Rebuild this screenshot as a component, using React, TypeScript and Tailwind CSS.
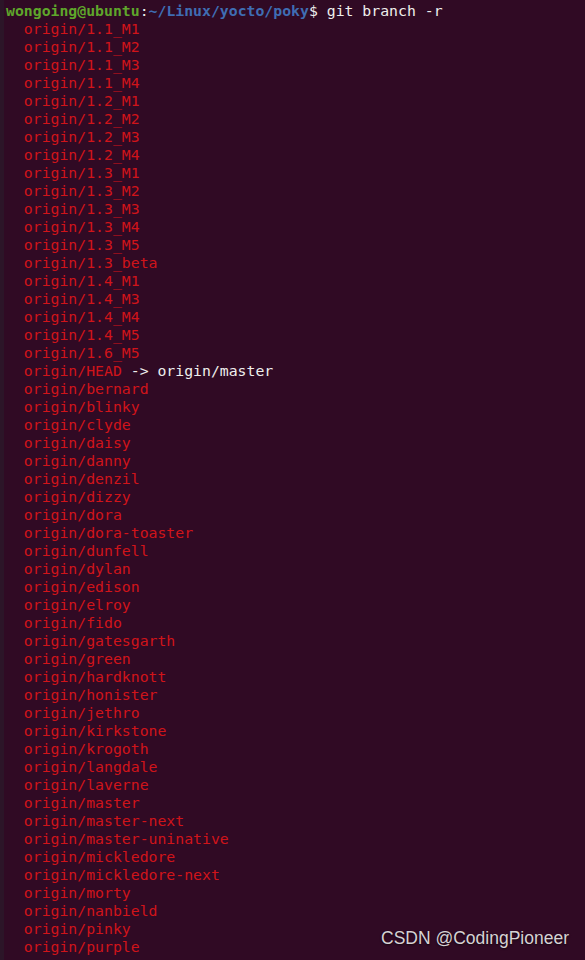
import React from 'react';

const branches = [
  '1.1_M1', '1.1_M2', '1.1_M3', '1.1_M4',
  '1.2_M1', '1.2_M2', '1.2_M3', '1.2_M4',
  '1.3_M1', '1.3_M2', '1.3_M3', '1.3_M4', '1.3_M5', '1.3_beta',
  '1.4_M1', '1.4_M3', '1.4_M4', '1.4_M5', '1.6_M5',
];

const names = [
  'bernard', 'blinky', 'clyde', 'daisy', 'danny', 'denzil', 'dizzy', 'dora',
  'dora-toaster', 'dunfell', 'dylan', 'edison', 'elroy', 'fido', 'gatesgarth',
  'green', 'hardknott', 'honister', 'jethro', 'kirkstone', 'krogoth', 'langdale',
  'laverne', 'master', 'master-next', 'master-uninative', 'mickledore',
  'mickledore-next', 'morty', 'nanbield', 'pinky', 'purple',
];

const Line = ({ children }: { children: React.ReactNode }) => (
  <div className="h-[18px] leading-[18px] whitespace-pre">{children}</div>
);

const Branch = ({ name }: { name: string }) => (
  <Line>
    <span className="text-[#d0141a]">{'  origin/' + name}</span>
  </Line>
);

export default function App() {
  return (
    <div className="relative flex h-[960px] w-[585px] overflow-hidden bg-[#300a24]">
      <div className="w-[4px] shrink-0 bg-[#2c1528]" />
      <div
        className="flex-1 pl-[2px] pt-[2px] text-[14.8px] text-[#eeeeec]"
        style={{ fontFamily: '"DejaVu Sans Mono", "Liberation Mono", monospace' }}
      >
        <Line>
          <span className="font-bold text-[#5fa62b]">wongoing@ubuntu</span>
          <span>:</span>
          <span className="font-bold text-[#3f6db3]">~/Linux/yocto/poky</span>
          <span>$ git branch -r</span>
        </Line>
        {branches.map((b) => (
          <Branch key={b} name={b} />
        ))}
        <Line>
          <span className="text-[#d0141a]">  origin/HEAD</span>
          <span> -&gt; origin/master</span>
        </Line>
        {names.map((n) => (
          <Branch key={n} name={n} />
        ))}
      </div>
      <div
        className="absolute right-[16px] bottom-[9px] text-[17.5px] text-[#d6d2d4] [text-shadow:0_1px_2px_rgba(0,0,0,0.6)]"
        style={{ fontFamily: '"Liberation Sans", Arial, sans-serif' }}
      >
        CSDN @CodingPioneer
      </div>
    </div>
  );
}
